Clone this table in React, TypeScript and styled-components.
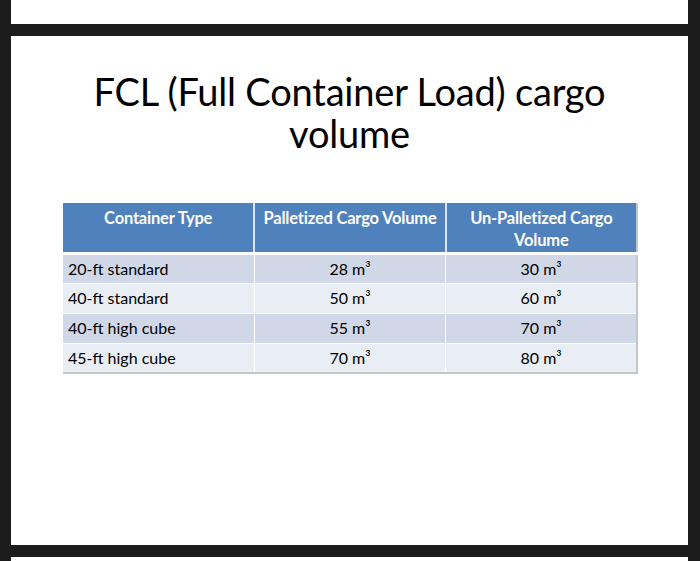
import React from "react";
import styled, { createGlobalStyle } from "styled-components";

const rows: { type: string; palletized: string; unpalletized: string }[] = [
  { type: "20-ft standard", palletized: "28 m³", unpalletized: "30 m³" },
  { type: "40-ft standard", palletized: "50 m³", unpalletized: "60 m³" },
  { type: "40-ft high cube", palletized: "55 m³", unpalletized: "70 m³" },
  { type: "45-ft high cube", palletized: "70 m³", unpalletized: "80 m³" },
];

export default function App() {
  return (
    <>
      <GlobalStyle />
      <Frame>
        <Gap $height={24} />
        <Bar />
        <Slide>
          <Title>
            FCL (Full Container Load) cargo
            <br />
            volume
          </Title>
          <Table>
            <thead>
              <tr>
                <HeadCell>Container Type</HeadCell>
                <HeadCell>Palletized Cargo Volume</HeadCell>
                <HeadCell>
                  Un-Palletized Cargo
                  <br />
                  Volume
                </HeadCell>
              </tr>
            </thead>
            <tbody>
              {rows.map(({ type, palletized, unpalletized }, index) => (
                <Row key={type} $odd={index % 2 === 0}>
                  <Cell $align="left">{type}</Cell>
                  <Cell $align="center">{palletized}</Cell>
                  <Cell $align="center">{unpalletized}</Cell>
                </Row>
              ))}
            </tbody>
          </Table>
        </Slide>
        <Bar />
        <Gap $height={4} />
      </Frame>
    </>
  );
}

const GlobalStyle = createGlobalStyle`
  html, body {
    margin: 0;
    padding: 0;
    background: #ffffff;
  }
`;

const Frame = styled.div`
  width: 700px;
  height: 561px;
  box-sizing: border-box;
  padding: 0 12px 0 11px;
  background-color: #1c1c1d;
  display: flex;
  flex-direction: column;
  overflow: hidden;
`;

const Gap = styled.div<{ $height: number }>`
  height: ${({ $height }) => $height}px;
  flex-shrink: 0;
  background-color: #ffffff;
`;

const Bar = styled.div`
  height: 12px;
  flex-shrink: 0;
  background-color: #1c1c1d;
`;

const Slide = styled.section`
  flex: 1;
  background-color: #ffffff;
  display: flex;
  flex-direction: column;
  align-items: center;
  padding-top: 34px;
`;

const Title = styled.h1`
  margin: 0;
  font-family: Lato, "Open Sans", sans-serif;
  font-weight: 400;
  font-size: 38px;
  line-height: 42px;
  color: #000000;
  text-align: center;
  letter-spacing: -0.2px;
`;

const Table = styled.table`
  margin-top: 49px;
  margin-left: 2px;
  width: 575px;
  border-collapse: collapse;
  table-layout: fixed;
  font-family: Lato, "Open Sans", sans-serif;
  font-size: 16px;
  border-right: 2px solid #c4c6cc;
  border-bottom: 2px solid #c4c6cc;
`;

const HeadCell = styled.th`
  height: 50px;
  box-sizing: border-box;
  padding: 4px 4px 0;
  vertical-align: top;
  background-color: #4f81bd;
  color: #ffffff;
  font-size: 16.5px;
  font-weight: 700;
  line-height: 22px;
  letter-spacing: -0.2px;
  text-align: center;
  border-right: 2px solid #dbe5f3;
  border-bottom: 3px solid #ffffff;
  &:last-child {
    border-right: none;
  }
`;

const Row = styled.tr<{ $odd: boolean }>`
  background-color: ${({ $odd }) => ($odd ? "#d0d8e8" : "#e9edf4")};
  border-bottom: 1px solid #ffffff;
`;

const Cell = styled.td<{ $align: "left" | "center" }>`
  height: 30px;
  box-sizing: border-box;
  padding: 0 5px;
  color: #000000;
  line-height: 20px;
  text-align: ${({ $align }) => $align};
  border-right: 1px solid #ffffff;
  &:last-child {
    border-right: none;
  }
`;
